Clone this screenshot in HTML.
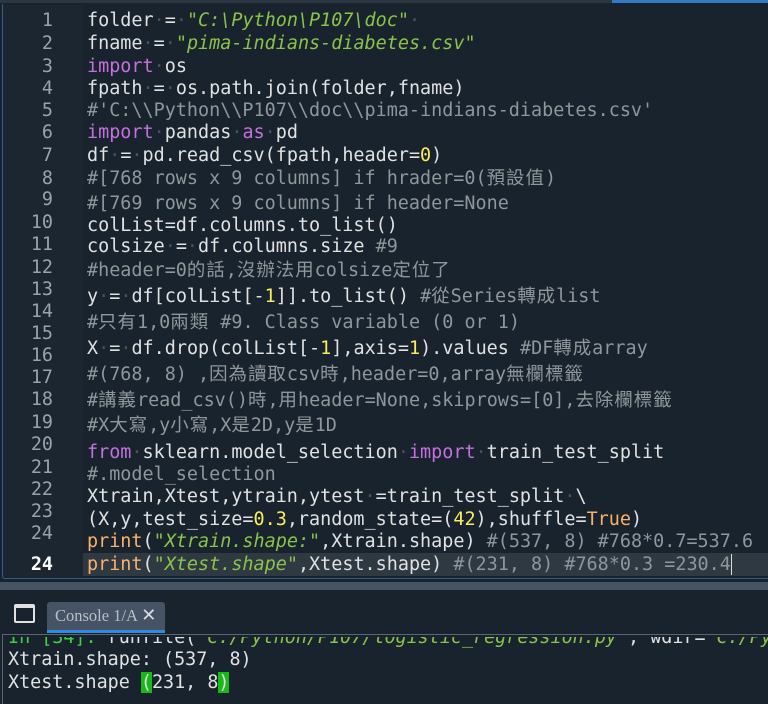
<!DOCTYPE html>
<html><head><meta charset="utf-8"><style>
body{margin:0;width:768px;height:703px;background:#19232d;overflow:hidden;position:relative;font-family:"DejaVu Sans Mono","Liberation Mono","Noto Sans CJK TC",monospace;}
.l{position:absolute;left:87px;height:22px;line-height:22px;font-size:18.45px;color:#e0e1e3;white-space:pre;}
.n{position:absolute;left:0;width:53px;text-align:right;height:22px;line-height:22px;font-size:18.4px;color:#9aa2aa;}
.k{color:#c670e0}.s{color:#8bc34a;font-style:italic}.c{color:#8f969c}.y{color:#faed5c}.p{color:#fab16c}.t{color:#fab16c}
.d{color:#46525e}.j{letter-spacing:1px}
.cl{position:absolute;left:8px;height:22px;line-height:22px;font-size:18.4px;color:#e0e1e3;white-space:pre;}
</style></head><body>
<div style="position:absolute;left:0;top:0;width:768px;height:3px;background:#2b3640"></div>
<div style="position:absolute;left:612px;top:0;width:156px;height:3px;background:#2f7bc4"></div>
<div style="position:absolute;left:2px;top:4px;width:766px;height:574px;border-left:1px solid #2f5f8a;border-bottom:1px solid #2f5f8a;border-radius:0 0 0 3px"></div>
<div style="position:absolute;left:3px;top:5px;width:80px;height:572px;background:#1c2630"></div>
<div style="position:absolute;left:83px;top:553px;width:685px;height:23px;background:#2f3942"></div>
<div style="position:absolute;left:0;top:582px;width:768px;height:8px;background:#455364"></div>
<div style="position:absolute;left:0;top:590px;width:768px;height:113px;background:#19232d"></div>

<div class="n" style="top:10px">1</div><div class="n" style="top:33px">2</div><div class="n" style="top:56px">3</div><div class="n" style="top:78px">4</div><div class="n" style="top:100px">5</div><div class="n" style="top:122px">6</div><div class="n" style="top:145px">7</div><div class="n" style="top:168px">8</div><div class="n" style="top:189px">9</div><div class="n" style="top:212px">10</div><div class="n" style="top:234px">11</div><div class="n" style="top:257px">12</div><div class="n" style="top:279px">13</div><div class="n" style="top:301px">14</div><div class="n" style="top:323px">15</div><div class="n" style="top:345px">16</div><div class="n" style="top:367px">17</div><div class="n" style="top:389px">18</div><div class="n" style="top:412px">19</div><div class="n" style="top:434px">20</div><div class="n" style="top:457px">21</div><div class="n" style="top:479px">22</div><div class="n" style="top:501px">23</div><div class="n" style="top:523px">24</div>
<div class="n" style="top:554px;color:#fff;font-weight:bold">24</div>

<div class="l" style="top:10px">folder<span class="d">·</span>=<span class="d">·</span><span class="s">"C:\Python\P107\doc"</span><span class="d">·</span></div>
<div class="l" style="top:33px">fname<span class="d">·</span>=<span class="d">·</span><span class="s">"pima-indians-diabetes.csv"</span></div>
<div class="l" style="top:56px"><span class="k">import</span><span class="d">·</span>os</div>
<div class="l" style="top:78px">fpath<span class="d">·</span>=<span class="d">·</span>os.path.join(folder,fname)</div>
<div class="l c" style="top:100px">#'C:\\Python\\P107\\doc\\pima-indians-diabetes.csv'</div>
<div class="l" style="top:122px"><span class="k">import</span><span class="d">·</span>pandas<span class="d">·</span><span class="k">as</span><span class="d">·</span>pd</div>
<div class="l" style="top:145px">df<span class="d">·</span>=<span class="d">·</span>pd.read_csv(fpath,header=<span class="y">0</span>)</div>
<div class="l c" style="top:168px">#[768 rows x 9 columns] if hrader=0(<span class="j">預設值</span>)</div>
<div class="l c" style="top:193px">#[769 rows x 9 columns] if header=None</div>
<div class="l" style="top:215px">colList=df.columns.to_list()</div>
<div class="l" style="top:236px">colsize<span class="d">·</span>=<span class="d">·</span>df.columns.size<span class="c"> #9</span></div>
<div class="l c" style="top:260px">#header=0<span class="j">的話</span>,<span class="j">沒辦法用</span>colsize<span class="j">定位了</span></div>
<div class="l" style="top:286px">y<span class="d">·</span>=<span class="d">·</span>df[colList[-<span class="y">1</span>]].to_list()<span class="c"> #<span class="j">從</span>Series<span class="j">轉成</span>list</span></div>
<div class="l c" style="top:312px">#<span class="j">只有</span>1,0<span class="j">兩類</span> #9. Class variable (0 or 1)</div>
<div class="l" style="top:338px">X<span class="d">·</span>=<span class="d">·</span>df.drop(colList[-<span class="y">1</span>],axis=<span class="y">1</span>).values<span class="c"> #DF<span class="j">轉成</span>array</span></div>
<div class="l c" style="top:364px">#(768, 8) ,<span class="j">因為讀取</span>csv<span class="j">時</span>,header=0,array<span class="j">無欄標籤</span></div>
<div class="l c" style="top:390px">#<span class="j">講義</span>read_csv()<span class="j">時</span>,<span class="j">用</span>header=None,skiprows=[0],<span class="j">去除欄標籤</span></div>
<div class="l c" style="top:415px">#X<span class="j">大寫</span>,y<span class="j">小寫</span>,X<span class="j">是</span>2D,y<span class="j">是</span>1D</div>
<div class="l" style="top:442px"><span class="k">from</span><span class="d">·</span>sklearn.model_selection<span class="d">·</span><span class="k">import</span><span class="d">·</span>train_test_split</div>
<div class="l c" style="top:464px">#.model_selection</div>
<div class="l" style="top:486px">Xtrain,Xtest,ytrain,ytest<span class="d">·</span>=train_test_split<span class="d">·</span>\</div>
<div class="l" style="top:509px">(X,y,test_size=<span class="y">0.3</span>,random_state=(<span class="y">42</span>),shuffle=<span class="t">True</span>)</div>
<div class="l" style="top:531px"><span class="p">print</span>(<span class="s">"Xtrain.shape:"</span>,Xtrain.shape)<span class="c"> #(537, 8) #768*0.7=537.6</span></div>
<div class="l" style="top:554px"><span class="p">print</span>(<span class="s">"Xtest.shape"</span>,Xtest.shape)<span class="c"> #(231, 8) #768*0.3 =230.4</span><span style="border-left:1px solid #ddd"></span></div>

<div style="position:absolute;left:14px;top:604px;width:17px;height:13px;border:2px solid #e0e1e3;border-top-width:4px;border-radius:2px"></div>
<div style="position:absolute;left:47px;top:602px;width:118px;height:28px;background:#455364;border-radius:3px 3px 0 0;font-family:'Liberation Serif',serif;font-size:16.5px;color:#b8bfc6;line-height:28px;padding-left:8px;box-sizing:border-box;white-space:nowrap">Console 1/A <span style="font-family:'DejaVu Sans';font-size:18px;color:#d8dde2">✕</span></div>
<div style="position:absolute;left:47px;top:630px;width:118px;height:3px;background:#2f8ae0"></div>
<div style="position:absolute;left:2px;top:634px;width:766px;height:69px;border-left:1px solid #5a6570;border-top:1px solid #5a6570"></div>
<div class="cl" style="top:627px;clip-path:inset(10px 0 0 0)"><span style="color:#3cd43c">In [34]:</span> runfile(<span class="s">'C:/Python/P107/logistic_regression.py'</span>, wdir=<span class="s">'C:/Py</span></div>
<div class="cl" style="top:649px">Xtrain.shape: (537, 8)</div>
<div class="cl" style="top:672px">Xtest.shape <span style="background:#19b919">(</span>231, 8<span style="background:#19b919">)</span></div>
</body></html>
